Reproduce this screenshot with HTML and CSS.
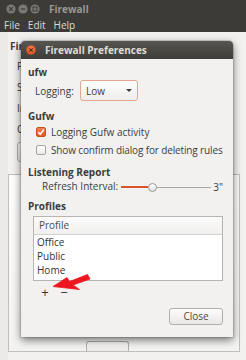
FILE: index.html
```html
<!DOCTYPE html>
<html>
<head>
<meta charset="utf-8">
<title>Firewall</title>
<link rel="stylesheet" href="styles.css">
</head>
<body>
<div class="main">
  <div class="titlebar">
    <svg class="wbtns" width="34" height="10" viewBox="0 0 34 10">
      <circle cx="5" cy="5" r="4.6" fill="#7b7974"/>
      <path d="M3.2 3.2 L6.8 6.8 M6.8 3.2 L3.2 6.8" stroke="#3c3b37" stroke-width="1.2"/>
      <circle cx="17" cy="5" r="4.6" fill="#7b7974"/>
      <path d="M14.8 5 L19.2 5" stroke="#3c3b37" stroke-width="1.2"/>
      <circle cx="29" cy="5" r="4.6" fill="#7b7974"/>
      <rect x="27" y="3" width="4" height="4" fill="none" stroke="#3c3b37" stroke-width="1"/>
    </svg>
    <span class="wtitle">Firewall</span>
  </div>
  <div class="menubar"><span>File</span><span>Edit</span><span>Help</span></div>
  <div class="content">
    <div class="mh">Firewall</div>
    <div class="ml first">Profile:</div>
    <div class="ml">Status:</div>
    <div class="ml">Incoming:</div>
    <div class="ml">Outgoing:</div>
    <div class="mbtn"></div>
    <div class="panel">
      <div class="pbtn"></div>
    </div>
  </div>
</div>

<div class="dialog">
  <div class="dtitle">
    <svg class="dclose" width="10" height="10" viewBox="0 0 10 10">
      <defs>
        <radialGradient id="cg" cx="50%" cy="40%" r="60%">
          <stop offset="0" stop-color="#f58c5c"/>
          <stop offset="1" stop-color="#d9481a"/>
        </radialGradient>
      </defs>
      <circle cx="5" cy="5" r="4.8" fill="url(#cg)"/>
      <path d="M3.3 3.3 L6.7 6.7 M6.7 3.3 L3.3 6.7" stroke="#5a2410" stroke-width="1.1"/>
    </svg>
    <span class="dtext">Firewall Preferences</span>
  </div>
  <div class="dbody">
    <div class="sec s-ufw">ufw</div>
    <div class="logrow">
      <span class="loglabel">Logging:</span>
      <div class="combo"><span>Low</span><span class="carrow"></span></div>
    </div>
    <div class="sec s-gufw">Gufw</div>
    <div class="cbrow">
      <span class="cb checked">
        <svg width="8" height="8" viewBox="0 0 8 8"><path d="M1.2 4.2 L3.2 6.2 L6.9 1.6" fill="none" stroke="#fff" stroke-width="1.6"/></svg>
      </span>
      <span class="cblabel">Logging Gufw activity</span>
    </div>
    <div class="cbrow">
      <span class="cb"></span>
      <span class="cblabel tight">Show confirm dialog for deleting rules</span>
    </div>
    <div class="sec s-listen">Listening Report</div>
    <div class="refrow">
      <span class="reflabel">Refresh Interval:</span>
      <div class="slider">
        <div class="sfill"></div>
        <div class="sknob"></div>
        <div class="strack"></div>
      </div>
      <span class="sval">3"</span>
    </div>
    <div class="sec s-prof">Profiles</div>
    <div class="list">
      <div class="lhead">Profile</div>
      <div class="lrow">Office</div>
      <div class="lrow">Public</div>
      <div class="lrow">Home</div>
      <div class="lrow">Schiff</div>
    </div>
    <div class="pmrow"><span class="pm">+</span><span class="pm">&#8722;</span></div>
    <div class="btnrow"><button class="btn">Close</button></div>
  </div>
</div>

<svg class="arrow" width="246" height="360" viewBox="0 0 246 360">
  <polygon points="53,286.5 67,277.5 69.5,281.5 87.5,274.5 90,279 73,285 79.5,289.5" fill="#ee1620" stroke="#ee1620" stroke-width="0.8" stroke-linejoin="round"/>
</svg>
</body>
</html>
```

FILE: styles.css
```css
* { box-sizing: border-box; }

body {
  margin: 0;
  width: 246px;
  height: 360px;
  overflow: hidden;
  position: relative;
  background: #f2f1f0;
  font-family: "Open Sans", "DejaVu Sans", sans-serif;
  font-size: 10px;
  color: #3c3c3c;
  white-space: nowrap;
}

/* ---------- main window ---------- */
.main {
  width: 246px;
  height: 360px;
  display: flex;
  flex-direction: column;
}

.titlebar {
  height: 17px;
  background: #3c3b37;
  display: flex;
  align-items: center;
  padding-left: 6px;
}

.wbtns { display: block; }

.wtitle {
  margin-left: 9px;
  color: #9a9892;
  font-weight: bold;
  font-size: 10px;
  line-height: 14px;
}

.menubar {
  height: 15px;
  background: #3c3b37;
  color: #dfdbd2;
  display: flex;
  align-items: center;
  gap: 8px;
  padding-left: 4px;
  line-height: 14px;
}

.content {
  flex: 1;
  display: flex;
  flex-direction: column;
  padding-top: 7px;
  background: linear-gradient(90deg, #ebeae8 0, #ebeae8 8px, #f2f1f0 8px);
}

.mh {
  padding-left: 10px;
  font-weight: bold;
  line-height: 14px;
}

.ml {
  padding-left: 17px;
  line-height: 21px;
}
.ml.first { margin-top: 3px; }

.mbtn {
  margin: 2px 0 0 17px;
  width: 60px;
  height: 20px;
  border: 1px solid #b3b0ab;
  border-radius: 3px;
  background: linear-gradient(#fafafa, #e4e3e1);
}

.panel {
  margin: 12px 6px 8px 8px;
  flex: 1;
  border: 1px solid #c2bfba;
  background: linear-gradient(#fdfdfd, #f3f3f2);
  display: flex;
  flex-direction: column;
}

.pbtn {
  margin: auto 0 0 77px;
  width: 43px;
  height: 10px;
  border: 1px solid #b3b0ab;
  border-bottom: none;
  border-radius: 3px 3px 0 0;
  background: linear-gradient(#fafafa, #ebeae8);
}

/* ---------- dialog ---------- */
.dialog {
  position: absolute;
  left: 21px;
  top: 41px;
  width: 212px;
  height: 296px;
  background: #f2f1f0;
  border-radius: 4px 4px 0 0;
  box-shadow: 0 3px 9px rgba(0, 0, 0, 0.55), 0 0 0 1px rgba(0, 0, 0, 0.12);
  display: flex;
  flex-direction: column;
}

.dtitle {
  height: 18px;
  flex: none;
  background: linear-gradient(#57554f, #3e3d39);
  border-radius: 4px 4px 0 0;
  display: flex;
  align-items: center;
  padding-left: 5px;
}

.dclose { display: block; }

.dtext {
  margin-left: 9px;
  color: #dfdbd2;
  font-weight: bold;
  font-size: 10px;
  line-height: 14px;
}

.dbody {
  flex: 1;
  display: flex;
  flex-direction: column;
  padding: 0 10px 0 7px;
}

.sec {
  font-weight: bold;
  line-height: 14px;
  color: #3c3c3c;
}
.s-ufw { margin-top: 6px; }
.s-gufw { margin-top: 8px; }
.s-listen { margin-top: 6px; }
.s-prof { margin-top: 6px; }

.logrow {
  margin-top: 1px;
  height: 21px;
  display: flex;
  align-items: center;
  padding-left: 7px;
}

.loglabel { width: 45px; }

.combo {
  width: 58px;
  height: 21px;
  border: 1px solid #e4a68e;
  border-radius: 3px;
  background: linear-gradient(#fefefe, #eeedeb);
  display: flex;
  align-items: center;
  padding-left: 5px;
  padding-right: 5px;
}

.carrow {
  margin-left: auto;
  width: 0;
  height: 0;
  border-left: 3px solid transparent;
  border-right: 3px solid transparent;
  border-top: 3px solid #3c3c3c;
}

.cbrow {
  height: 18px;
  display: flex;
  align-items: center;
  padding-left: 8px;
}

.cb {
  flex: none;
  width: 10px;
  height: 10px;
  border: 1px solid #a8a49f;
  border-radius: 2px;
  background: linear-gradient(#ffffff, #ecebe9);
  display: flex;
  align-items: center;
  justify-content: center;
}
.cb.checked {
  border-color: #c4501f;
  background: linear-gradient(#f08050, #dc5a26);
}
.cb svg { display: block; }

.cblabel { margin-left: 5px; }
.cblabel.tight { letter-spacing: -0.14px; }

.refrow {
  height: 14px;
  display: flex;
  align-items: center;
  padding-left: 14px;
}

.reflabel { width: 80px; }

.slider {
  width: 91px;
  height: 9px;
  display: flex;
  align-items: center;
  margin-top: 2px;
}

.sfill {
  width: 27px;
  height: 2px;
  background: #d9562a;
}

.sknob {
  width: 9px;
  height: 9px;
  border-radius: 50%;
  border: 1px solid #9d9993;
  background: linear-gradient(#ffffff, #e3e2e0);
  flex: none;
}

.strack {
  flex: 1;
  height: 1px;
  background: #a9a6a1;
}

.sval {
  margin-left: 2px;
  margin-top: 1px;
}

.list {
  margin: 3px 0 0 5px;
  width: 190px;
  height: 65px;
  border: 1px solid #b8b5b0;
  background: #ffffff;
  overflow: hidden;
}

.lhead {
  height: 18px;
  line-height: 17px;
  padding-left: 5px;
  border-bottom: 1px solid #d3d1cd;
  background: linear-gradient(#fbfbfb, #f1f0ef);
  color: #4d4d4d;
}

.lrow {
  line-height: 14px;
  padding-left: 3px;
  color: #333;
}

.pmrow {
  margin-top: 3px;
  height: 16px;
  display: flex;
  align-items: center;
  gap: 5px;
  padding-left: 10px;
}

.pm {
  width: 14px;
  text-align: center;
  font-size: 13px;
  line-height: 16px;
  color: #333;
}

.btnrow {
  margin-top: 8px;
  display: flex;
  justify-content: flex-end;
}

.btn {
  width: 54px;
  height: 17px;
  padding: 0;
  border: 1px solid #b3b0ab;
  border-radius: 3px;
  background: linear-gradient(#fdfdfd, #e8e7e5);
  font-family: "Open Sans", "DejaVu Sans", sans-serif;
  font-size: 10px;
  color: #4a4a4a;
  line-height: 15px;
}

/* annotation overlay */
.arrow {
  position: absolute;
  left: 0;
  top: 0;
  pointer-events: none;
}
```
